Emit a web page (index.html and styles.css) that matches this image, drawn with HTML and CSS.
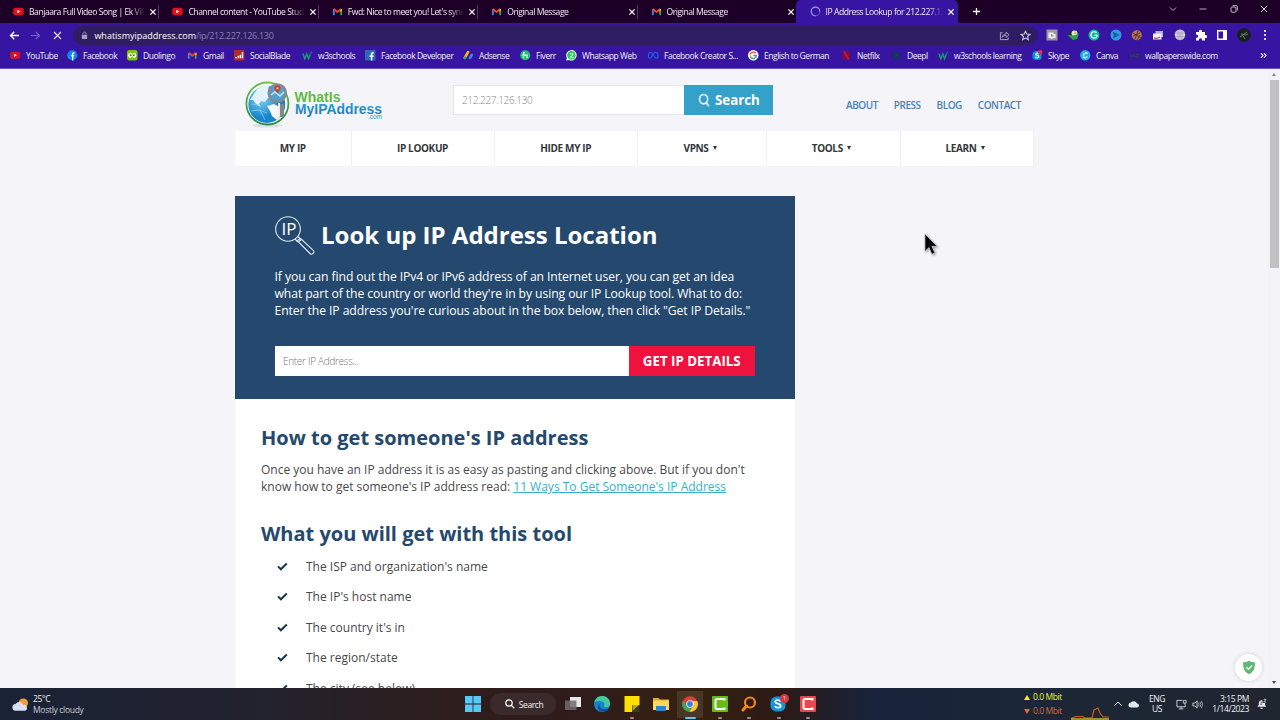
FILE: index.html
```html
<!DOCTYPE html>
<html lang="en">
<head>
    <meta charset="UTF-8">
    <title>IP Address Lookup for 212.227.126.130</title>
    <link rel="stylesheet" href="styles.css">
</head>
<body>
    <!-- Shared icons -->
    <svg class="defs" width="0" height="0">
        <symbol id="youtube" viewBox="0 0 12 12"><rect x="0.3" y="2" width="11.4" height="8" rx="2" fill="#e0101c"/><path d="M4.8 4.2v3.6L8 6z" fill="#fff"/></symbol>
        <symbol id="gmail" viewBox="0 0 12 12"><path d="M1 10V3.5h2V10z" fill="#4285f4"/><path d="M9 10V3.5h2V10z" fill="#34a853"/><path d="M2 3.2l4 3.3 4-3.3" fill="none" stroke="#ea4335" stroke-width="2.1"/><path d="M9 4.5l2-1.7V5L9 6.4z" fill="#fbbc04"/></symbol>
        <symbol id="close" viewBox="0 0 10 10"><path d="M2.4 2.4l5.2 5.2M7.6 2.4L2.4 7.6" stroke="#fff" stroke-width="1.3"/></symbol>
        <symbol id="w3" viewBox="0 0 12 12"><path d="M1 4l2.2 6L5.5 4.5 7.5 10l2.4-6" fill="none" stroke="#149c72" stroke-width="1.6"/><path d="M9.6 2.5h2L10.3 4" fill="none" stroke="#149c72" stroke-width=".8"/></symbol>
        <symbol id="check" viewBox="0 0 12 10"><path d="M1 4.9l3.2 3.2L10.8 1.7" fill="none" stroke="#12374f" stroke-width="2.2"/></symbol>
    </svg>

    <!-- Browser tabs -->
    <div class="tabs">
        <div class="tab"><svg class="icon"><use href="#youtube"/></svg><span class="title">Banjaara Full Video Song | Ek Vill</span><svg class="close"><use href="#close"/></svg></div>
        <div class="tab"><svg class="icon"><use href="#youtube"/></svg><span class="title">Channel content - YouTube Stud</span><svg class="close"><use href="#close"/></svg></div>
        <div class="tab"><svg class="icon"><use href="#gmail"/></svg><span class="title">Fwd: Nice to meet you! Let's sync</span><svg class="close"><use href="#close"/></svg></div>
        <div class="tab"><svg class="icon"><use href="#gmail"/></svg><span class="title">Original Message</span><svg class="close"><use href="#close"/></svg></div>
        <div class="tab last"><svg class="icon"><use href="#gmail"/></svg><span class="title">Original Message</span><svg class="close"><use href="#close"/></svg></div>
        <div class="tab active"><svg class="icon" viewBox="0 0 12 12"><circle cx="6" cy="6" r="4.7" fill="none" stroke="#5f4fc4" stroke-width="1.1"/><path d="M10.7 6A4.7 4.7 0 1 0 6 10.7" fill="none" stroke="#9c92ef" stroke-width="1.3"/></svg><span class="title">IP Address Lookup for 212.227.12</span><svg class="close"><use href="#close"/></svg></div>
        <svg class="plus" viewBox="0 0 10 10"><path d="M5 1v8M1 5h8" stroke="#fff" stroke-width="1.4"/></svg>
        <div class="window-buttons">
            <svg viewBox="0 0 10 10"><path d="M2 3.5l3 3 3-3" fill="none" stroke="#b8a9bd"/></svg>
            <svg viewBox="0 0 10 10"><path d="M1.5 5h7" stroke="#b8a9bd"/></svg>
            <svg viewBox="0 0 10 10"><rect x="2" y="3" width="5" height="5.2" rx="1" fill="none" stroke="#c5b8ca"/><path d="M3.6 1.6H7a1.4 1.4 0 0 1 1.4 1.4v3.6" fill="none" stroke="#c5b8ca" stroke-width=".9"/></svg>
            <svg viewBox="0 0 10 10"><path d="M2 2l6 6M8 2L2 8" stroke="#ded6e2"/></svg>
        </div>
    </div>

    <!-- Address bar -->
    <div class="toolbar">
        <svg class="nav-icon" viewBox="0 0 12 12"><path d="M11 6H2M5.7 2L1.7 6l4 4" fill="none" stroke="#fff" stroke-width="1.5"/></svg>
        <svg class="nav-icon" viewBox="0 0 12 12"><path d="M1 6h9M6.3 2l4 4-4 4" fill="none" stroke="#7565cf" stroke-width="1.3"/></svg>
        <svg class="nav-icon" viewBox="0 0 12 12"><path d="M2.2 2.2l7.6 7.6M9.8 2.2L2.2 9.8" stroke="#dcd6fa" stroke-width="1.3"/></svg>
        <div class="address">
            <svg class="lock" viewBox="0 0 8 10"><rect x="1" y="4" width="6" height="5" rx=".6" fill="#a6a0bf"/><path d="M2.3 4V2.8a1.7 1.7 0 0 1 3.4 0V4" fill="none" stroke="#a6a0bf"/></svg>
            <span class="url"><b>whatismyipaddress.com</b>/ip/212.227.126.130</span>
            <svg class="action" viewBox="0 0 12 12"><path d="M4 3H1.5v7.5H10V8" fill="none" stroke="#b5aed0"/><path d="M3.5 8c.3-2.5 2-3.6 4.3-3.6V2.3L11 5.2 7.8 8V6C6 6 4.5 6.5 3.5 8z" fill="none" stroke="#b5aed0" stroke-width=".9"/></svg>
            <svg class="action" viewBox="0 0 12 12"><path d="M6 1.3l1.4 3.2 3.5.3-2.7 2.3.9 3.5L6 8.7l-3.1 1.9.9-3.5L1.1 4.8l3.5-.3z" fill="none" stroke="#d2cce6" stroke-width="1.1"/></svg>
        </div>
        <div class="extensions">
            <svg viewBox="0 0 14 14"><rect x="1.5" y="1.5" width="11" height="11" fill="#9a9a9e"/><path d="M3.5 4.5h5V6h2v4h-3v1H6v-1H3.5z" fill="#f0f0f0"/><path d="M6 6l3 2-3 1z" fill="#888"/></svg>
            <svg viewBox="0 0 14 14"><path d="M2 7c1-3 3-4 5-4v5z" fill="#202c26"/><circle cx="8.5" cy="5.5" r="3" fill="#d8e8d5"/><path d="M1.5 7l5.500.5 6-1.500-2 5-4 1z" fill="#27a743"/><circle cx="9.5" cy="5" r="1.3" fill="#e8bd2e"/></svg>
            <svg viewBox="0 0 14 14"><circle cx="7" cy="7" r="5.5" fill="#12b995"/><path d="M9.5 4.8A3.2 3.2 0 1 0 10 8.3V7.4H7.5" fill="none" stroke="#fff" stroke-width="1.2"/></svg>
            <svg viewBox="0 0 14 14"><circle cx="7" cy="7" r="5.5" fill="#2b9bea"/><path d="M4 4l6.5 3L4 10l1-3z" fill="#17315e"/><path d="M5 7h4" stroke="#2b9bea"/></svg>
            <svg viewBox="0 0 14 14"><circle cx="6.8" cy="7.3" r="5" fill="#b97543"/><path d="M3 5l8 5M5 11l3-8M3 8l7-3M7 12l3-5" stroke="#34213d" stroke-width=".7"/></svg>
            <svg viewBox="0 0 14 14"><path d="M4.5 3H12v6H4.5z" fill="#b7b1d0"/><path d="M2 5.5h8.5v6H2z" fill="#f2f0f5"/><path d="M3 9.8c2 1 4 .6 6-.8" fill="none" stroke="#b84b60" stroke-width="1.2"/></svg>
            <svg viewBox="0 0 14 14"><circle cx="7" cy="6.8" r="5.3" fill="#d5d1df"/><path d="M2 5h10M2 8.5h10M5 2v10M9 2v10M7 1.5v11" stroke="#9a94ac" stroke-width=".6"/></svg>
            <svg viewBox="0 0 14 14"><path d="M2 4h3a1.6 1.6 0 1 1 3 0h3v3a1.6 1.6 0 1 1 0 3v2.5H8a1.6 1.6 0 1 0-3 0H2V9.7a1.6 1.6 0 1 0 0-3z" fill="#fff"/></svg>
            <svg viewBox="0 0 14 14"><path d="M2.7 2.7h8.6v8.6H2.7z" fill="none" stroke="#fff" stroke-width="1.4"/><path d="M8 2.5h3.5v9H8z" fill="#fff"/></svg>
            <svg viewBox="0 0 14 14"><circle cx="7" cy="7" r="7" fill="#17201f"/><path d="M3 9l7-5M4 6l5 1 2-1M6 8l2 3" stroke="#738b79" stroke-width=".9"/></svg>
            <svg viewBox="0 0 14 14"><circle cx="7" cy="3" r="1.1" fill="#fff"/><circle cx="7" cy="7" r="1.1" fill="#fff"/><circle cx="7" cy="11" r="1.1" fill="#fff"/></svg>
        </div>
    </div>

    <!-- Bookmarks -->
    <div class="bookmarks">
        <div class="bookmark"><svg><use href="#youtube"/></svg>YouTube</div>
        <div class="bookmark"><svg viewBox="0 0 12 12"><circle cx="6" cy="6" r="5.8" fill="#1684ee"/><path d="M6.5 12V4.5c0-1 .7-1.5 2-1.3M4.5 6.5h3.7" fill="none" stroke="#fff" stroke-width="1.5"/></svg>Facebook</div>
        <div class="bookmark"><svg viewBox="0 0 12 12"><rect width="12" height="12" rx="2.5" fill="#78c800"/><ellipse cx="3.7" cy="6" rx="2.3" ry="3" fill="#fff"/><ellipse cx="8.3" cy="6" rx="2.3" ry="3" fill="#fff"/><circle cx="4.2" cy="6" r="1.1" fill="#426b22"/><circle cx="7.8" cy="6" r="1.1" fill="#426b22"/></svg>Duolingo</div>
        <div class="bookmark"><svg><use href="#gmail"/></svg>Gmail</div>
        <div class="bookmark"><svg viewBox="0 0 12 12"><rect width="12" height="12" rx="1" fill="#b3282d"/><path d="M2.5 9.5V8M5 9.5V6.5M7.3 9.5v-4M9.7 9.5v-7" stroke="#fff" stroke-width="1.6"/></svg>SocialBlade</div>
        <div class="bookmark"><svg><use href="#w3"/></svg>w3schools</div>
        <div class="bookmark"><svg viewBox="0 0 12 12"><rect width="12" height="12" rx="1" fill="#3367ad"/><path d="M7.5 12V5c0-1.3.6-2 2.5-1.8M5 7h5" fill="none" stroke="#fff" stroke-width="1.7"/></svg>Facebook Developer</div>
        <div class="bookmark"><svg viewBox="0 0 12 12"><path d="M5.8 2.5L2 9" stroke="#fbbc04" stroke-width="3" stroke-linecap="round"/><path d="M10 5.5L8 9" stroke="#4285f4" stroke-width="3" stroke-linecap="round"/><circle cx="2.2" cy="9" r="1.5" fill="#34a853"/></svg>Adsense</div>
        <div class="bookmark"><svg viewBox="0 0 12 12"><circle cx="6" cy="6" r="5.8" fill="#1dbf73"/><path d="M4 9.5V4.3c0-1 .6-1.5 1.8-1.5M2.8 5.8h5.2v3.7" fill="none" stroke="#fff" stroke-width="1.3"/></svg>Fiverr</div>
        <div class="bookmark"><svg viewBox="0 0 12 12"><path d="M0 12l1-3A6 6 0 1 1 3.5 11.4z" fill="#f0fff1"/><circle cx="6.2" cy="6" r="4.8" fill="#29c653"/><text x="3.9" y="9" font-size="8" font-weight="700" fill="#fff">2</text></svg>Whatsapp Web</div>
        <div class="bookmark"><svg viewBox="0 0 12 12"><path d="M6 6C4.5 3.5 3.7 2.6 2.7 2.6 0 2.6-.2 9.4 2.2 9.4 3.8 9.4 5 5.8 6 4.5 7.3 2.5 8 2.6 9 2.6c2.7 0 3.5 6.8 1 6.8C8.7 9.4 7.6 8.5 6 6z" fill="none" stroke="#116be5" stroke-width="1.3"/></svg>Facebook Creator S...</div>
        <div class="bookmark"><svg viewBox="0 0 12 12"><circle cx="6" cy="6" r="6" fill="#fff"/><g fill="none" stroke-width="1.6"><path d="M8.8 3.7A3.6 3.6 0 0 0 2.7 4.6" stroke="#ea4335"/><path d="M2.7 4.6a3.6 3.6 0 0 0 0 2.8" stroke="#fbbc04"/><path d="M2.7 7.4a3.6 3.6 0 0 0 5.6 1.5" stroke="#34a853"/><path d="M8.3 8.9a3.6 3.6 0 0 0 1.3-2.7H6" stroke="#4285f4"/></g></svg>English to German</div>
        <div class="bookmark"><svg viewBox="0 0 12 12"><path d="M3.5 1v10M8.5 1v10" stroke="#8b0c24" stroke-width="2.4"/><path d="M3.2 1l5.6 10" stroke="#d20c24" stroke-width="2.4"/></svg>Netfilx</div>
        <div class="bookmark"><svg viewBox="0 0 12 12"><path d="M6 .5l5 2.8v5L6 11.5 1 8.3v-5z" fill="#17305e"/><path d="M4 4l4 2-4 2" fill="none" stroke="#274070" stroke-width=".8"/></svg>Deepl</div>
        <div class="bookmark"><svg><use href="#w3"/></svg>w3schools learning</div>
        <div class="bookmark"><svg viewBox="0 0 12 12"><rect x=".5" y="1" width="10.5" height="10.5" rx="4" fill="#118edb"/><path d="M8 4.4C6.5 3 4 3.7 4.3 5.1c.3 1.3 3.5.8 3.5 2.3C7.8 9 5 9.2 3.9 8" fill="none" stroke="#fff" stroke-width="1.3"/><circle cx="9.3" cy="2.7" r="2.6" fill="#db3552"/></svg>Skype</div>
        <div class="bookmark"><svg viewBox="0 0 12 12"><circle cx="6" cy="6" r="5.9" fill="#20aee0"/><path d="M8.5 4.6C8.2 2 4 3.2 3.9 6.7c0 3.2 3.2 2.8 4.5.8" fill="none" stroke="#fff" stroke-width="1.2"/></svg>Canva</div>
        <div class="bookmark"><svg viewBox="0 0 12 12"><path d="M0 2.5h12v8H0z" fill="#302078"/><path d="M1 5l2 3 2-3 2 3M7.5 5h3v3h-3" fill="none" stroke="#453589"/></svg>wallpaperswide.com</div>
        <div class="bookmark more"><svg viewBox="0 0 8 8"><path d="M1 1.5L3.5 4 1 6.5M4.5 1.5L7 4 4.5 6.5" fill="none" stroke="#fff" stroke-width="1.2"/></svg></div>
    </div>

    <!-- Web page -->
    <div class="viewport">
        <div class="page">
            <div class="header">
                <svg class="logo" viewBox="0 0 140 52">
                    <defs>
                        <radialGradient id="globe" cx=".35" cy=".35"><stop offset="0" stop-color="#87d2f4"/><stop offset="1" stop-color="#1685ca"/></radialGradient>
                        <linearGradient id="green" x2="0" y2="1"><stop offset="0" stop-color="#6cc24a"/><stop offset="1" stop-color="#218b46"/></linearGradient>
                        <linearGradient id="blue" x2="0" y2="1"><stop offset="0" stop-color="#29a8df"/><stop offset="1" stop-color="#1d75b8"/></linearGradient>
                    </defs>
                    <ellipse cx="22" cy="45.5" rx="15" ry="2" fill="#dcdee0"/>
                    <circle cx="22.4" cy="23.5" r="21" fill="#fff" stroke="url(#green)" stroke-width="1.8"/>
                    <circle cx="21.8" cy="24.5" r="18.5" fill="url(#globe)"/>
                    <path d="M12 9c4-3 8-4 12-3l-1 5 3 5-4 3-2 3-4-1-2 3 2 3-4-2-4-5-3 0z" fill="#e3f3fa"/>
                    <path d="M22 26l7-2 9 5c0 4-2 8-6 11l-5-4-2-5z" fill="#f8fbfc"/>
                    <path d="M6 31l9-1 5 10M6 24l8 1M14 30l8 3" fill="none" stroke="#8dcdeb" stroke-width=".8"/>
                    <rect x="34.5" y="24" width="4.5" height="13" rx="1" fill="#85878c"/>
                    <rect x="33" y="23" width="2" height="13" fill="#eceeee"/>
                    <circle cx="32.3" cy="13" r="8.5" fill="#4ba4d3" stroke="#858b92" stroke-width="2.6"/>
                    <path d="M26 15l4-3 5 4 4-4" fill="none" stroke="#cae7f4" stroke-width="1.5"/>
                    <path d="M32.5 13.5c-2-3-3-3.5-3-5.2a3 3 0 0 1 6 0c0 1.7-1.5 2.2-3 5.2z" fill="#cf3c2b"/><circle cx="32.5" cy="8.3" r="1" fill="#fff"/>
                    <g class="logo-text">
                        <text x="49.5" y="21.5" font-size="14" textLength="46" lengthAdjust="spacingAndGlyphs" fill="#62ba45">WhatIs</text>
                        <text x="50" y="33.5" font-size="14" textLength="87" lengthAdjust="spacingAndGlyphs" fill="url(#blue)">MyIPAddress</text>
                        <text class="dotcom" x="123" y="38.8" font-size="6.5" textLength="14" lengthAdjust="spacingAndGlyphs" fill="#2795c9">.com</text>
                    </g>
                </svg>
                <div class="search">
                    <div class="search-input">212.227.126.130</div>
                    <div class="search-button"><svg viewBox="0 0 14 16"><ellipse cx="6" cy="6.5" rx="4.4" ry="5" fill="none" stroke="#fff" stroke-width="1.6"/><path d="M8.8 10.5l3 3.7" stroke="#fff" stroke-width="1.7"/></svg>Search</div>
                </div>
                <div class="links"><a>ABOUT</a><a>PRESS</a><a>BLOG</a><a>CONTACT</a></div>
            </div>
            <div class="menu">
                <div>MY IP</div>
                <div>IP LOOKUP</div>
                <div>HIDE MY IP</div>
                <div class="dropdown">VPNS <i></i></div>
                <div class="dropdown">TOOLS <i></i></div>
                <div class="dropdown">LEARN <i></i></div>
            </div>
            <div class="article">
                <div class="lookup">
                    <div class="lookup-title">
                        <svg viewBox="0 0 40 40"><g fill="none" stroke="#dce9f4" stroke-width="1.1"><circle cx="13" cy="13" r="12.3"/><path d="M20 23l3 3M23 20.5l3 3M21.5 25.5l4-3.5M23.5 26l3-2.7 11.7 11c2 2-1.2 5.2-3.2 3.2L23.5 26z"/></g><text x="6.5" y="19" font-size="17" textLength="15" lengthAdjust="spacingAndGlyphs" fill="#fff">IP</text></svg>
                        <h1>Look up IP Address Location</h1>
                    </div>
                    <p>If you can find out the IPv4 or IPv6 address of an Internet user, you can get an idea<br>what part of the country or world they're in by using our IP Lookup tool. What to do:<br>Enter the IP address you're curious about in the box below, then click "Get IP Details."</p>
                    <div class="lookup-form">
                        <div class="ip-input">Enter IP Address...</div>
                        <div class="ip-button">GET IP DETAILS</div>
                    </div>
                </div>
                <div class="content">
                    <h2>How to get someone's IP address</h2>
                    <p>Once you have an IP address it is as easy as pasting and clicking above. But if you don't<br>know how to get someone's IP address read: <a>11 Ways To Get Someone's IP Address</a></p>
                    <h2>What you will get with this tool</h2>
                    <ul>
                        <li><svg><use href="#check"/></svg>The ISP and organization's name</li>
                        <li><svg><use href="#check"/></svg>The IP's host name</li>
                        <li><svg><use href="#check"/></svg>The country it's in</li>
                        <li><svg><use href="#check"/></svg>The region/state</li>
                        <li><svg><use href="#check"/></svg>The city (see below)</li>
                    </ul>
                </div>
            </div>
        </div>
        <div class="scrollbar"><i class="up"></i><div class="thumb"></div><i class="down"></i></div>
        <div class="shield"><svg viewBox="0 0 14 16"><path d="M7 .8c2 1.2 4 1.6 6.3 1.7C13.5 9 12 12.7 7 15.3 2 12.7.5 9 .7 2.5 3 2.4 5 2 7 .8z" fill="#5cb873"/><path d="M4 7.5l2.4 2.4 4-4" fill="none" stroke="#fff" stroke-width="1.3"/></svg></div>
        <svg class="pointer" viewBox="0 0 20 30"><path d="M4 3v19l4.3-4.2L11.5 25l3.3-1.5-3.3-7h5.8z" fill="#050505" stroke="#dcdce2" stroke-width=".8"/></svg>
    </div>

    <!-- Taskbar -->
    <div class="taskbar">
        <div class="weather">
            <svg viewBox="0 0 18 16"><circle cx="12" cy="6" r="5" fill="#ee9d36"/><path d="M4 14a3.5 3.5 0 0 1-.2-7A4.5 4.5 0 0 1 12 8a3 3 0 0 1 1.5 6z" fill="#d8e0f8"/></svg>
            <div>25°C<br><span>Mostly cloudy</span></div>
        </div>
        <div class="apps">
            <div class="app"><svg viewBox="0 0 16 16"><path d="M0 0h7.6v7.6H0zM8.4 0H16v7.6H8.4zM0 8.4h7.6V16H0zM8.4 8.4H16V16H8.4z" fill="#58c8f4"/></svg></div>
            <div class="task-search"><svg viewBox="0 0 10 10"><circle cx="4" cy="4" r="3.2" fill="none" stroke="#fff" stroke-width="1.2"/><path d="M6.3 6.3l3 3" stroke="#fff" stroke-width="1.3"/></svg>Search</div>
            <div class="app"><svg viewBox="0 0 16 16"><path d="M5 1h11v10H5z" fill="#e9e7e8"/><path d="M0 4.5h11.5V14H0z" fill="#706b6d" opacity=".85"/></svg></div>
            <div class="app"><svg viewBox="0 0 16 16"><circle cx="8" cy="8" r="8" fill="#1484cf"/><path d="M.5 6C2 1 6-.5 9.5.1c4 .7 6.5 4 6.5 7.3 0 3-2.5 4-5 3.5-1.5-.3-1.5-1.2-.6-1.9C11 6 7 3.5.5 6z" fill="#46c8a0"/><path d="M7 6.5c-3 2-1.5 7 3.5 6.8 2 0 3.5-.7 4.5-1.6C12.5 16 7 17 4.5 13.5 3 11 4 8 7 6.5z" fill="#0e4f91"/></svg></div>
            <div class="app running"><svg viewBox="0 0 16 16"><path d="M.5 0h15v8.5L9 16H.5z" fill="#ffe000"/><path d="M8 9h7.5v7H8z" fill="#3b392b"/><path d="M8.5 15V9H15z" fill="#b8a015"/></svg></div>
            <div class="app"><svg viewBox="0 0 16 16"><path d="M0 2h5.5L7 3.5h9V14H0z" fill="#dfa728"/><path d="M0 4.5h16V14H0z" fill="#ffd65a"/><path d="M3 10h10v5H3z" fill="#2489cd"/></svg></div>
            <div class="app running selected"><svg viewBox="0 0 16 16"><circle cx="8" cy="8" r="7.8" fill="#e23c30"/><path d="M1 4.5a7.8 7.8 0 0 0 6.3 11.3L11 10 8 8 4.5 9z" fill="#3da854"/><path d="M7.3 15.8A7.8 7.8 0 0 0 15.3 5H8l3.5 4.8z" fill="#f9c927"/><circle cx="8" cy="8" r="3.7" fill="#fff"/><circle cx="8" cy="8" r="2.9" fill="#397fe6"/></svg></div>
            <div class="app running"><svg viewBox="0 0 16 16"><rect width="16" height="16" rx="1" fill="#65bb18"/><path d="M12.5 4.5V3H5.3C4 3 3.5 3.5 3.5 5v6c0 1.5.5 2 1.8 2h7.2v-1.5" fill="none" stroke="#fff" stroke-width="2"/></svg></div>
            <div class="app running"><svg viewBox="0 0 16 16"><circle cx="9" cy="6.5" r="5" fill="none" stroke="#f48420" stroke-width="2.2"/><path d="M5.5 10L2 14" stroke="#f48420" stroke-width="3" stroke-linecap="round"/></svg></div>
            <div class="app running"><svg viewBox="0 0 16 16"><rect x=".5" y=".5" width="15" height="15" rx="6" fill="#1695d8"/><path d="M10.7 5.5C8.5 3 4.8 4 5.2 6c.5 2 5.5 1.2 5.5 3.8 0 2.5-4.3 2.5-6 .5" fill="none" stroke="#fff" stroke-width="1.7"/></svg><span class="badge">1</span></div>
            <div class="app running"><svg viewBox="0 0 16 16"><rect width="16" height="16" rx="1" fill="#e6484d"/><path d="M12.5 4.5V3H5.3C4 3 3.5 3.5 3.5 5v6c0 1.5.5 2 1.8 2h7.2v-1.5" fill="none" stroke="#fff" stroke-width="2"/></svg></div>
        </div>
        <div class="tray">
            <div class="network"><div class="upload"><i></i>0.0 Mbit</div><div class="download"><i></i>0.0 Mbit</div></div>
            <svg class="graph" viewBox="0 0 38 14"><path d="M0 12.5l5-2h7l2 1.5h7l2-8 4-2 2 5 3 4h6" fill="none" stroke="#d4581e" stroke-width="1.2"/><path d="M0 13h38" stroke="#c5b62e" stroke-width="1.3"/></svg>
            <svg class="chevron" viewBox="0 0 10 10"><path d="M1.5 6.5L5 3l3.5 3.5" fill="none" stroke="#eee"/></svg>
            <svg class="cloud" viewBox="0 0 12 10"><path d="M3 8.5a2.5 2.5 0 0 1 0-5 3.5 3.5 0 0 1 6 1 2 2 0 0 1 0 4z" fill="#e2e7ee"/></svg>
            <div class="language">ENG<br>US</div>
            <svg class="monitor" viewBox="0 0 12 12"><path d="M7 1.5H1v7h9V6M5.5 8.5v2M3 10.8h5" fill="none" stroke="#d7dbe0"/><path d="M8 1.5h3v3H8zM9.5 4.5V6" fill="none" stroke="#d7dbe0" stroke-width=".9"/></svg>
            <svg class="volume" viewBox="0 0 12 12"><path d="M1 4.5h2L5.5 2v8L3 7.5H1z" fill="none" stroke="#d7dbe0"/><path d="M7 4q1.5 2 0 4M8.7 3q2 3 0 6M10.3 2q2.5 4 0 8" fill="none" stroke="#aeb6c0" stroke-width=".9"/></svg>
            <div class="clock">3:15 PM<br>1/14/2023</div>
            <svg class="bell" viewBox="0 0 12 12"><path d="M1.5 9L3 7V5a3.5 3.5 0 0 1 4-3l.5 3H10v2l1 2z" fill="#e7e9ed"/><path d="M4.5 10a1.5 1.5 0 0 0 3 0z" fill="#e7e9ed"/><path d="M8.5 1H11L8.5 3.8H11" fill="none" stroke="#e7e9ed" stroke-width=".8"/><path d="M4.8 4h2L4.8 6.5h2" fill="none" stroke="#293142" stroke-width=".7"/></svg>
        </div>
    </div>
</body>
</html>
```
FILE: styles.css
```css
/* Reset default margin, padding, and box-sizing */
* {
    box-sizing: border-box;
}

html, body {
    margin: 0;
    padding: 0;
}

body {
    width: 1280px;
    height: 720px;
    overflow: hidden;
    display: flex;
    flex-direction: column;
    font-family: "Open Sans", "Noto Sans", sans-serif;
}

svg {
    display: block;
    flex: none;
}

.defs {
    position: absolute;
}

h1, h2, p, ul {
    margin: 0;
    padding: 0;
}

/* Tab strip */
.tabs {
    display: flex;
    height: 23px;
    flex: none;
    background: #1c0026;
    color: #f1e9f4;
    font-size: 8.6px;
    letter-spacing: -0.46px;
}

.tab {
    display: flex;
    align-items: center;
    width: 159.4px;
    padding-left: 13px;
    border-right: 1px solid #56345e;
    border-image: linear-gradient(transparent 25%, #56345e 25%, #56345e 80%, transparent 80%) 1;
}

.tab.last {
    border: none;
    width: 158px;
}

.tab .icon {
    width: 11px;
    height: 11px;
}

.tab .title {
    width: 118px;
    margin-left: 5px;
    white-space: nowrap;
    -webkit-mask-image: linear-gradient(90deg, #000 88%, transparent);
}

.tab .close {
    width: 10px;
    height: 10px;
    margin-left: 3px;
}

.tab.active {
    width: 162px;
    padding-left: 14px;
    border: none;
    border-radius: 5px 5px 0 0;
    background: #3715a2;
}

.tab.active .title {
    width: 117px;
}

.plus {
    width: 9px;
    height: 9px;
    margin: 7px 0 0 14px;
}

.window-buttons {
    display: flex;
    gap: 20.3px;
    margin: 4px 11px 0 auto;
}

.window-buttons svg {
    width: 10px;
    height: 10px;
}

/* Toolbar */
.toolbar {
    display: flex;
    align-items: center;
    height: 24px;
    flex: none;
    padding-left: 9px;
    background: #3715a2;
}

.nav-icon {
    width: 11px;
    height: 11px;
    margin-right: 10.3px;
}

.address {
    display: flex;
    align-items: center;
    width: 965px;
    height: 19px;
    padding: 0 7px 0 8px;
    border-radius: 10px;
    background: #2e1d63;
}

.lock {
    width: 7px;
    height: 9px;
}

.url {
    margin-left: 6.5px;
    flex: 1;
    color: #8a7fb4;
    font-size: 9px;
    letter-spacing: -0.3px;
}

.url b {
    color: #fff;
    font-weight: 400;
    letter-spacing: 0;
}

.action {
    width: 11px;
    height: 11px;
    margin-left: 10px;
}

.extensions {
    display: flex;
    gap: 7.3px;
    margin-left: 7px;
}

.extensions svg {
    width: 14px;
    height: 14px;
}

/* Bookmarks bar */
.bookmarks {
    display: grid;
    grid-template-columns: 57px 60px 60px 47px 68px 63px 98px 57px 46px 82px 100px 93px 50px 47px 94px 48px 49px 131px 10px;
    height: 22px;
    flex: none;
    padding: 0 0 4px 10px;
    background: #3715a2;
    color: #f0edfa;
    font-size: 8.5px;
    letter-spacing: -0.46px;
    border-bottom: 1px solid #6a55b8;
}

.bookmark {
    display: flex;
    align-items: center;
    gap: 5.5px;
    white-space: nowrap;
}

.bookmark svg {
    width: 10.5px;
    height: 10.5px;
}

.bookmark.more svg {
    width: 7px;
    height: 7px;
}

/* Page area */
.viewport {
    position: relative;
    display: flex;
    flex: 1;
    min-height: 0;
    overflow: hidden;
    background: #f5f4f9;
}

.page {
    width: 1268px;
    padding-left: 235px;
}

.header {
    display: flex;
    height: 62px;
    padding-left: 10px;
}

.logo {
    width: 140px;
    height: 52px;
    margin-top: 11px;
}

.logo-text {
    font-family: "Liberation Sans", Arial, sans-serif;
    font-weight: 700;
}

.dotcom {
    font-weight: 400;
}

.search {
    display: flex;
    width: 320px;
    height: 30px;
    margin: 16px 0 0 68px;
}

.search-input {
    width: 231px;
    padding-left: 8px;
    border: 1px solid #e6e5eb;
    border-right: none;
    background: #fff;
    color: #85858a;
    font-size: 10px;
    font-weight: 300;
    letter-spacing: -0.35px;
    line-height: 28px;
}

.search-button {
    display: flex;
    align-items: center;
    gap: 4px;
    width: 89px;
    padding-left: 14px;
    background: #33a1c9;
    color: #fff;
    font-size: 13.3px;
    font-weight: 700;
}

.search-button svg {
    width: 13px;
    height: 15px;
}

.links {
    display: flex;
    gap: 15.9px;
    margin: 29px 0 0 73px;
    color: #4a82b5;
    font-size: 10px;
    letter-spacing: -0.45px;
    font-weight: 600;
    line-height: 15px;
}

/* Main menu */
.menu {
    display: grid;
    grid-template-columns: 116.5px 143px 143.5px 128.5px 134px 133.5px;
    width: 799px;
    height: 35px;
    background: #fff;
    color: #34373b;
    font-size: 10px;
    letter-spacing: -0.35px;
    font-weight: 700;
}

.menu div {
    display: flex;
    align-items: center;
    justify-content: center;
    padding-bottom: 2px;
    border-right: 1px solid #f1f1f4;
}

.menu .dropdown {
    padding-right: 3px;
}

.menu i {
    margin-left: 4.5px;
    border: 2px solid transparent;
    border-top: 4px solid #34373b;
    border-bottom: none;
}

/* Article */
.article {
    width: 560px;
    height: 600px;
    margin-top: 30px;
    background: #fff;
}

.lookup {
    height: 203px;
    padding: 19px 40px 0 39.5px;
    background: #24486e;
    color: #fff;
}

.lookup-title {
    display: flex;
    align-items: center;
    height: 41px;
}

.lookup-title svg {
    width: 40px;
    height: 40px;
}

h1 {
    margin: -2px 0 0 6.5px;
    font-size: 24px;
    line-height: 40px;
    white-space: nowrap;
}

.lookup p {
    margin-top: 12px;
    font-size: 12.2px;
    letter-spacing: -0.09px;
    line-height: 17.1px;
    white-space: nowrap;
}

.lookup-form {
    display: flex;
    height: 30px;
    margin-top: 27px;
}

.ip-input {
    width: 354.5px;
    padding-left: 8.5px;
    background: #fff;
    color: #75757a;
    font-size: 10px;
    letter-spacing: -0.3px;
    font-weight: 300;
    line-height: 30px;
}

.ip-button {
    width: 125.5px;
    background: #f0123e;
    color: #fff;
    font-size: 13.3px;
    font-weight: 700;
    line-height: 30px;
    text-align: center;
}

.content {
    padding: 25px 26px 0;
    color: #48484a;
}

h2 {
    color: #24486e;
    font-size: 20px;
    line-height: 28px;
    white-space: nowrap;
}

.content p {
    margin: 9px 0 24px;
    font-size: 12px;
    line-height: 17.4px;
    white-space: nowrap;
}

.content a {
    color: #37afd0;
    text-decoration: underline;
}

ul {
    margin-top: 3px;
    list-style: none;
}

li {
    display: flex;
    align-items: center;
    height: 30.5px;
    padding-left: 16px;
    font-size: 12px;
}

li svg {
    width: 11px;
    height: 9px;
    margin-right: 18px;
}

/* Scrollbar */
.scrollbar {
    display: flex;
    flex-direction: column;
    align-items: center;
    width: 12px;
    background: #f3f2f6;
}

.thumb {
    width: 9px;
    height: 188px;
    margin-top: 4px;
    background: #c1c1c3;
}

.up, .down {
    border: 2.5px solid transparent;
}

.up {
    margin-top: 4px;
    border-top: none;
    border-bottom: 3px solid #858588;
}

.down {
    margin: auto 0 4px;
    border-bottom: none;
    border-top: 3px solid #444;
}

/* Floating badge and mouse pointer */
.shield {
    position: absolute;
    left: 1235px;
    top: 585px;
    display: flex;
    align-items: center;
    justify-content: center;
    width: 27px;
    height: 27px;
    border-radius: 50%;
    background: #fff;
    box-shadow: 0 0 4px #cfced4;
}

.shield svg {
    width: 14px;
    height: 15px;
}

.pointer {
    position: absolute;
    left: 921px;
    top: 162px;
    width: 19px;
    height: 28px;
    filter: drop-shadow(1px 1px 1px #9a9aa0);
}

/* Taskbar */
.taskbar {
    display: grid;
    grid-template-columns: 458px 566px 256px;
    height: 32px;
    flex: none;
    background: linear-gradient(90deg, #1a2236, #22222e 20%, #2d1d1c 35%, #301c19 47%, #35220f 54%, #2c1a16 61%, #18223a 68%, #1b2637 80%, #202630);
    color: #f2f2f4;
    font-size: 8.5px;
    letter-spacing: -0.4px;
}

.weather {
    display: flex;
    gap: 4px;
    padding: 6px 0 0 12px;
    line-height: 10.5px;
}

.weather svg {
    width: 17px;
    height: 16px;
    margin-top: 3px;
}

.weather span {
    color: #c9cbd3;
    letter-spacing: -0.3px;
}

.apps {
    display: flex;
    align-items: center;
}

.app {
    position: relative;
    display: flex;
    align-items: center;
    justify-content: center;
    width: 29.35px;
    height: 32px;
}

.app svg {
    width: 16px;
    height: 16px;
}

.task-search {
    display: flex;
    align-items: center;
    gap: 4px;
    width: 66px;
    height: 22px;
    margin: 0 2.5px;
    padding-left: 15px;
    border-radius: 11px;
    background: #3a2a2b;
}

.task-search svg {
    width: 10px;
    height: 10px;
}

.running::after {
    content: "";
    position: absolute;
    left: 13px;
    bottom: 1px;
    width: 4px;
    height: 2px;
    border-radius: 1px;
    background: #9a8f90;
}

.selected {
    background: linear-gradient(#ffffff18, #ffffff18) center / 26px 27px no-repeat;
}

.selected::after {
    left: 9px;
    width: 11px;
    background: #69bfe6;
}

.badge {
    position: absolute;
    left: 16px;
    top: 6px;
    width: 9px;
    height: 9px;
    border-radius: 50%;
    background: #d9343f;
    font-size: 6px;
    line-height: 9px;
    text-align: center;
}

.tray {
    display: flex;
    align-items: center;
}

.network {
    width: 47px;
    line-height: 14.5px;
    white-space: nowrap;
}

.network i {
    display: inline-block;
    margin-right: 3px;
    border: 3px solid transparent;
}

.upload {
    color: #e4f52b;
}

.upload i {
    border-top: none;
    border-bottom: 5px solid #f5ee20;
}

.download {
    color: #d9632d;
}

.download i {
    border-bottom: none;
    border-top: 5px solid #e8682b;
}

.graph {
    width: 38px;
    height: 14px;
    margin-top: 17px;
}

.chevron {
    width: 10px;
    height: 10px;
    margin-left: 4px;
}

.cloud {
    width: 12px;
    height: 10px;
    margin-left: 5px;
}

.language {
    width: 18px;
    margin-left: 8px;
    line-height: 10.5px;
    text-align: center;
}

.monitor, .volume {
    width: 11px;
    height: 11px;
}

.monitor {
    margin-left: 10px;
}

.volume {
    margin-left: 5px;
}

.clock {
    width: 40px;
    margin-left: 6px;
    line-height: 10.5px;
    text-align: right;
    white-space: nowrap;
}

.bell {
    width: 11px;
    height: 12px;
    margin-left: 7px;
}
```
